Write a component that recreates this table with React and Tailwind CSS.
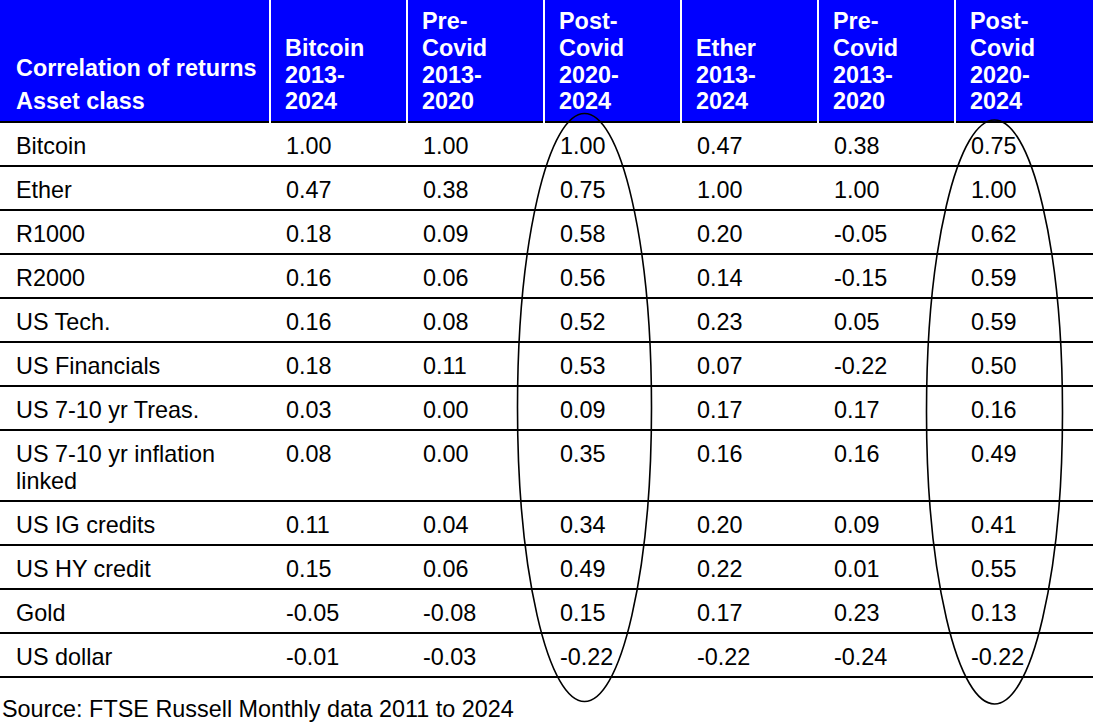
const headers = [
  ["Bitcoin", "2013-", "2024"],
  ["Pre-", "Covid", "2013-", "2020"],
  ["Post-", "Covid", "2020-", "2024"],
  ["Ether", "2013-", "2024"],
  ["Pre-", "Covid", "2013-", "2020"],
  ["Post-", "Covid", "2020-", "2024"],
];

const rows = [
  ["Bitcoin", "1.00", "1.00", "1.00", "0.47", "0.38", "0.75"],
  ["Ether", "0.47", "0.38", "0.75", "1.00", "1.00", "1.00"],
  ["R1000", "0.18", "0.09", "0.58", "0.20", "-0.05", "0.62"],
  ["R2000", "0.16", "0.06", "0.56", "0.14", "-0.15", "0.59"],
  ["US Tech.", "0.16", "0.08", "0.52", "0.23", "0.05", "0.59"],
  ["US Financials", "0.18", "0.11", "0.53", "0.07", "-0.22", "0.50"],
  ["US 7-10 yr Treas.", "0.03", "0.00", "0.09", "0.17", "0.17", "0.16"],
  ["US 7-10 yr inflation linked", "0.08", "0.00", "0.35", "0.16", "0.16", "0.49"],
  ["US IG credits", "0.11", "0.04", "0.34", "0.20", "0.09", "0.41"],
  ["US HY credit", "0.15", "0.06", "0.49", "0.22", "0.01", "0.55"],
  ["Gold", "-0.05", "-0.08", "0.15", "0.17", "0.23", "0.13"],
  ["US dollar", "-0.01", "-0.03", "-0.22", "-0.22", "-0.24", "-0.22"],
];

export default function App() {
  return (
    <div
      className="relative w-[1095px] h-[723px] bg-white text-black overflow-hidden"
      style={{ fontFamily: '"Liberation Sans", Arial, sans-serif' }}
    >
      <table className="w-[1093px] table-fixed border-collapse text-[23.4px]">
        <colgroup>
          <col className="w-[270px]" />
          <col className="w-[137px]" />
          <col className="w-[137px]" />
          <col className="w-[137px]" />
          <col className="w-[137px]" />
          <col className="w-[137px]" />
          <col className="w-[138px]" />
        </colgroup>
        <thead>
          <tr className="bg-[#0000ff] text-white font-bold border-b-2 border-black">
            <th className="h-[122px] align-bottom text-left font-bold pl-4 pb-[6px] leading-[26.67px]">
              <div className="mb-[7px]">Correlation of returns</div>
              <div>Asset class</div>
            </th>
            {headers.map((h, i) => (
              <th
                key={i}
                className="h-[122px] align-bottom text-left font-bold border-l-2 border-white pl-[14px] pb-[6px] leading-[26.67px]"
              >
                {h.map((line, j) => (
                  <div key={j}>{line}</div>
                ))}
              </th>
            ))}
          </tr>
        </thead>
        <tbody>
          {rows.map((r, i) => (
            <tr key={i} className="border-b-2 border-black">
              {r.map((cell, j) => (
                <td
                  key={j}
                  className="align-top pl-4 pr-2 pt-[10px] pb-[5px] leading-[27px] font-normal"
                >
                  {cell}
                </td>
              ))}
            </tr>
          ))}
        </tbody>
      </table>

      <p className="mt-[18px] pl-[2px] text-[23.4px] leading-[27px]">
        Source: FTSE Russell Monthly data 2011 to 2024
      </p>

      {/* hand-drawn style circles over the post-covid columns */}
      <svg
        className="absolute left-0 top-0 pointer-events-none"
        width="1095"
        height="723"
        viewBox="0 0 1095 723"
      >
        <ellipse cx="584.5" cy="407.5" rx="67" ry="294" fill="none" stroke="#000" strokeWidth="1.6" />
        <ellipse cx="994.5" cy="412" rx="68" ry="292" fill="none" stroke="#000" strokeWidth="1.6" />
      </svg>
    </div>
  );
}
